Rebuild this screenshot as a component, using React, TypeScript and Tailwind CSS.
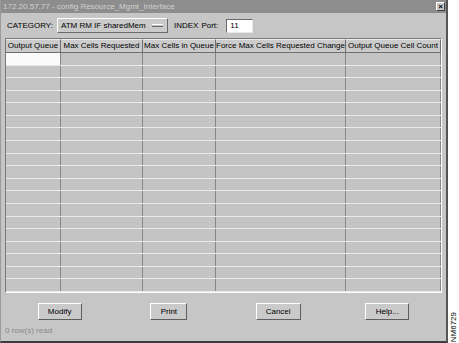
import React from 'react';

const columns = [
  { title: 'Output Queue', width: 'w-[55px]' },
  { title: 'Max Cells Requested', width: 'w-[82px]' },
  { title: 'Max Cells in Queue', width: 'w-[73px]' },
  { title: 'Force Max Cells Requested Change', width: 'w-[130px]' },
  { title: 'Output Queue Cell Count', width: 'flex-1' },
];

const rowCount = 19;

const buttons = ['Modify', 'Print', 'Cancel', 'Help...'];
const buttonWidths: Record<string, string> = {
  Modify: 'w-[44px]',
  Print: 'w-[37px]',
  Cancel: 'w-[45px]',
  'Help...': 'w-[44px]',
};

const App: React.FC = () => {
  return (
    <div className="w-[459px] h-[343px] bg-white flex overflow-hidden font-['Liberation_Sans',Arial,sans-serif] text-[8px] leading-none text-black">
      <div className="w-[448px] h-[343px] flex flex-col bg-[#c6c6c6] border-l border-l-[#9a9a9a] border-r-2 border-r-[#555555] border-b-2 border-b-[#3c3c3c]">
        {/* title bar */}
        <div className="h-[13px] bg-[#8d8d8d] flex items-center pl-[2px] pr-[1px] text-[#d2d2d2]">
          <span className="flex-1">172.20.57.77 - config Resource_Mgmt_Interface</span>
          <div className="w-[9px] h-[9px] bg-[#c8c8c8] border border-t-white border-l-white border-b-[#404040] border-r-[#404040] flex items-center justify-center text-[8px] text-black font-bold">
            ×
          </div>
        </div>

        {/* category selector */}
        <div className="h-[25px] flex items-center pl-[6px]">
          <span>CATEGORY:</span>
          <div className="ml-[4px] w-[111px] h-[15px] flex items-center pl-[3px] pr-[4px] bg-[#cacaca] border border-t-white border-l-white border-b-[#6a6a6a] border-r-[#6a6a6a]">
            <span className="flex-1">ATM RM IF sharedMem</span>
            <div className="w-[11px] h-[3px] bg-[#c0c0c0] border-t border-t-white border-b border-b-[#6a6a6a]" />
          </div>
          <span className="ml-[6px]">INDEX</span>
          <span className="ml-[3px]">Port:</span>
          <div className="ml-[8px] w-[27px] h-[14px] bg-white flex items-center pl-[3px] border border-t-[#6a6a6a] border-l-[#6a6a6a] border-b-[#e8e8e8] border-r-[#e8e8e8]">
            11
          </div>
        </div>

        {/* table */}
        <div className="mx-[4px] h-[255px] flex flex-col border border-t-[#7a7a7a] border-l-[#7a7a7a] border-b-white border-r-white">
          <div className="h-[14px] flex">
            {columns.map((col) => (
              <div
                key={col.title}
                className={`${col.width} flex items-center justify-center bg-[#cbcbcb] border-t border-t-[#ececec] border-r border-r-[#6e6e6e] border-b border-b-[#6e6e6e] whitespace-nowrap overflow-hidden`}
              >
                {col.title}
              </div>
            ))}
          </div>
          <div className="flex-1 flex flex-col">
            {Array.from({ length: rowCount }).map((_, r) => (
              <div key={r} className="flex-1 flex border-b border-b-[#e8e8e8]">
                {columns.map((col, c) => (
                  <div
                    key={col.title}
                    className={`${col.width} border-r border-r-[#858585] ${
                      r === 0 && c === 0 ? 'bg-[#fafafa]' : 'bg-[#c4c4c4]'
                    }`}
                  />
                ))}
              </div>
            ))}
          </div>
        </div>

        {/* buttons */}
        <div className="mt-[10px] mx-[4px] grid grid-cols-4 justify-items-center">
          {buttons.map((b) => (
            <div
              key={b}
              className={`${buttonWidths[b]} h-[17px] flex items-center justify-center bg-[#cacaca] border border-t-white border-l-white border-b-[#5e5e5e] border-r-[#5e5e5e]`}
            >
              {b}
            </div>
          ))}
        </div>

        {/* status */}
        <div className="mt-[7px] pl-[4px] text-[#8a8a8a]">0 row(s) read</div>
      </div>

      <div className="flex-1 flex flex-col justify-end items-center pb-[1px]">
        <span className="[writing-mode:vertical-rl] rotate-180 text-[8px]">NM6729</span>
      </div>
    </div>
  );
};

export default App;
